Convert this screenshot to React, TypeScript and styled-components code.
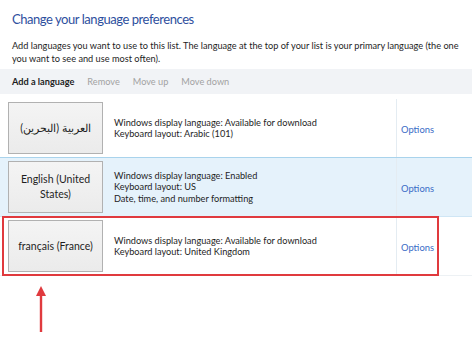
import React from "react";
import styled, { createGlobalStyle } from "styled-components";

const GlobalStyle = createGlobalStyle`
  html, body {
    margin: 0;
    padding: 0;
    background: #ffffff;
  }
  body {
    font-family: Lato, "Open Sans", "Noto Sans CJK SC", sans-serif;
    color: #1e1e1e;
  }
`;

const Page = styled.div`
  width: 474px;
  height: 343px;
  overflow: hidden;
`;

const Header = styled.div`
  padding: 10px 12px 0 12px;
`;

const Title = styled.h1`
  margin: 0;
  font-size: 13px;
  font-weight: 400;
  letter-spacing: -0.45px;
  line-height: 18px;
  color: #2e4f9e;
`;

const Description = styled.p`
  margin: 11px 0 0 0;
  font-size: 9.2px;
  line-height: 13px;
  color: #1e1e1e;
`;

const Toolbar = styled.div`
  margin-top: 4px;
  width: 472px;
  height: 25px;
  background: #f1f3f6;
  display: flex;
  align-items: center;
  gap: 13px;
  padding-left: 12px;
  box-sizing: border-box;
`;

const ToolItem = styled.span<{ $disabled?: boolean }>`
  font-size: 9.2px;
  font-weight: ${(p) => (p.$disabled ? 400 : 700)};
  color: ${(p) => (p.$disabled ? "#a2a2a2" : "#1e1e1e")};
`;

const List = styled.div`
  position: relative;
  margin-top: 5px;
  width: 472px;
`;

const Row = styled.div<{ $selected?: boolean; $last?: boolean }>`
  display: grid;
  grid-template-columns: 95px 1fr 76px;
  height: 58px;
  padding-left: 8px;
  background: ${(p) => (p.$selected ? "#e5f2fb" : "#ffffff")};
  border-bottom: 1px solid
    ${(p) => (p.$last ? "#edf1f4" : p.$selected ? "#cfe6f5" : "#a9d3ec")};
`;

const LangButton = styled.div`
  margin: 3px 0;
  border: 1px solid #b1b1b1;
  background: linear-gradient(#f4f4f4, #ebebeb);
  display: flex;
  align-items: center;
  justify-content: center;
  text-align: center;
  font-size: 10.5px;
  line-height: 15px;
  color: #1e1e1e;
  padding: 0 6px;
`;

const Info = styled.div`
  display: flex;
  flex-direction: column;
  justify-content: center;
  padding-left: 11px;
  font-size: 9.2px;
  line-height: 11.5px;
  color: #1e1e1e;
`;

const OptionsCell = styled.div`
  border-left: 1px solid #e4ecf2;
  display: flex;
  align-items: center;
  padding: 2px 0 0 4px;
  font-size: 9.4px;
  color: #3a6cc6;
`;

const Highlight = styled.div`
  position: absolute;
  left: 2px;
  top: 117px;
  width: 437px;
  height: 60px;
  border: 2px solid #e03a3e;
  box-sizing: border-box;
`;

const Arrow = styled.svg`
  display: block;
  margin: 8px 0 0 35px;
`;

const languages = [
  {
    name: "العربية (البحرين)",
    lines: [
      "Windows display language: Available for download",
      "Keyboard layout: Arabic (101)",
    ],
  },
  {
    name: "English (United States)",
    selected: true,
    lines: [
      "Windows display language: Enabled",
      "Keyboard layout: US",
      "Date, time, and number formatting",
    ],
  },
  {
    name: "français (France)",
    lines: [
      "Windows display language: Available for download",
      "Keyboard layout: United Kingdom",
    ],
  },
];

export default function App() {
  return (
    <Page>
      <GlobalStyle />
      <Header>
        <Title>Change your language preferences</Title>
        <Description>
          Add languages you want to use to this list. The language at the top
          of your list is your primary language (the one you want to see and
          use most often).
        </Description>
      </Header>
      <Toolbar>
        <ToolItem>Add a language</ToolItem>
        <ToolItem $disabled>Remove</ToolItem>
        <ToolItem $disabled>Move up</ToolItem>
        <ToolItem $disabled>Move down</ToolItem>
      </Toolbar>
      <List>
        {languages.map((lang, i) => (
          <Row
            key={lang.name}
            $selected={lang.selected}
            $last={i === languages.length - 1}
          >
            <LangButton>{lang.name}</LangButton>
            <Info>
              {lang.lines.map((line) => (
                <div key={line}>{line}</div>
              ))}
            </Info>
            <OptionsCell>Options</OptionsCell>
          </Row>
        ))}
        <Highlight />
      </List>
      <Arrow width="12" height="50" viewBox="0 0 12 50">
        <path d="M6 2 L11 12 L1 12 Z" fill="#e03a3e" />
        <line x1="6" y1="10" x2="6" y2="48" stroke="#e03a3e" strokeWidth="2.4" />
      </Arrow>
    </Page>
  );
}
